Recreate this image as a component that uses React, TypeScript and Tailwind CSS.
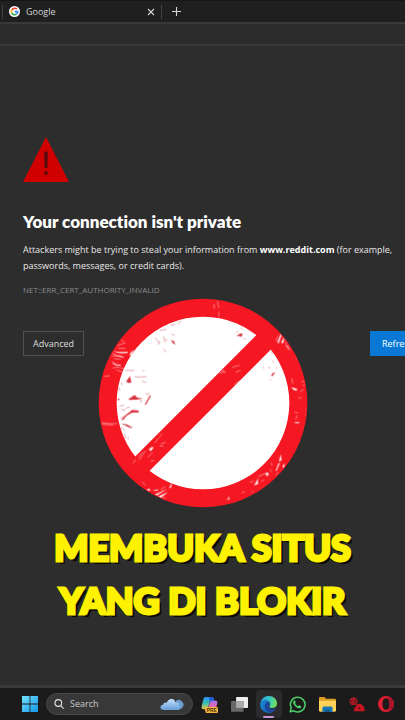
import type { ReactNode } from 'react';

function GoogleIcon() {
  return (
    <svg viewBox="0 0 24 24" className="size-[11px] shrink-0" aria-hidden="true">
      <circle cx="12" cy="12" r="12" fill="#fff" />
      <g fill="none" strokeWidth="3.6">
        <path d="M17.2 7.2A7 7 0 0 0 6 8.6" stroke="#ea4335" />
        <path d="M6 8.6a7 7 0 0 0 0 6.8" stroke="#fbbc05" />
        <path d="M6 15.4a7 7 0 0 0 10.6 2" stroke="#34a853" />
        <path d="M16.6 17.4A7 7 0 0 0 19 12.4h-6.6" stroke="#4285f4" />
      </g>
    </svg>
  );
}

function WarningIcon() {
  return (
    <svg viewBox="0 0 46 46" className="size-[46px]" aria-hidden="true">
      <path d="M23 0 46 45H0Z" fill="#d00000" />
      <path d="M21.2 14.5h3.6L24.4 31h-2.8Z" fill="#540c0c" />
      <circle cx="23" cy="36" r="1.9" fill="#540c0c" />
    </svg>
  );
}

function ProhibitedSign() {
  return (
    <svg viewBox="0 0 630 630" className="size-[210px]" role="img" aria-label="Blocked">
      <clipPath id="disc">
        <circle cx="315" cy="315" r="311" />
      </clipPath>
      <circle cx="315" cy="315" r="313" fill="#f51822" />
      <circle cx="315" cy="315" r="259" fill="#fff" />
      <path d="M110 520 520 110" stroke="#f51822" strokeWidth="61" />
      <g clipPath="url(#disc)" opacity=".9">
        {/* left half wear */}
        <g transform="translate(-21 -24)" strokeLinecap="round">
          <g fill="#fff">
            <path d="M66 181q14 7 43 4l2 4q-30 4-45-8Z" />
            <path d="M58 199q22-8 41 2l-2 2q-20-7-39-4Z" />
            <path d="M64 212q4 13 26 12l-1 3q-27 1-25-15Z" />
            <path d="m118 188 12-10-8 16-7 4ZM173 478l10-8 5 3-9 11ZM166 600l9-5 3 7-7 1Z" />
            <path d="m185 600 18-2-6 5ZM192 613l37-17-33 22ZM200 620l31-14-24 21ZM234 594l9-18-3 18Z" />
          </g>
          <g fill="none" stroke="#fff" strokeWidth="1.5">
            <path d="m80 166 22-7M82 174l21 2M91 148l7 8M64 190l10 4M66 234q12-7 34 3M41 259l14-2M76 239l22 9M70 206l18 1" />
            <path d="M32 398q20 4 45 3M34 403l32 2M127 519l6-10M143 500l12-13M163 483l-18 26M205 440l9-9M192 457l11-13M207 468l9 0M211 462l12-5M183 489l-13 13M180 514l9-3M153 576l10 9M210 598l12-8M212 628l10-5" />
          </g>
          <g fill="#d51c2a">
            <path d="m105 275 12-17 4 20-8 1ZM113 327l18-12 8 8 16 2-18 4-23 1ZM161 344l15-28 4 1-15 27Z" />
            <path d="m91 389 13-14 13-10 5-5 20 1 2 6-21 1-16 9-10 13ZM90 400l17 3 20 10-15-2Z" />
            <path d="m240 148 10 8 2 8-8-6ZM79 326l8 1-6 5Z" />
          </g>
          <g fill="none" stroke="#c53745" strokeWidth="1.5">
            <path d="M132 261l34-1M104 241l25 1M155 240l4 4M155 274l10 3M150 328v9M164 313l11-2M193 144l12 14M206 155l-4 8M218 140l4 17M242 132l8 4M262 101l8-9M240 105l11-1M208 121l17-3M86 349l12-4M92 359l10 1M106 354l9-3M84 292l2 10M91 278l1 6M108 409l12 5M90 412l12 9M100 432l4 12M111 442v5M91 384l7-6M248 153l3 9M226 148l1 3M219 178l5 8" />
          </g>
        </g>
        {/* right half wear */}
        <g transform="translate(309 -24)" strokeLinecap="round">
          <g fill="#fff">
            <path d="m229 158 10-29 4 3-10 29ZM240 158l11-22-4 24ZM244 137l19 22-3 1ZM250 153l17 25-5-3ZM263 153l5 0-2 5Z" />
            <path d="m270 291 17 5 2 6-10-1ZM281 396l15 0-3 4-12-1ZM159 587l12-23 0 18ZM193 551l8-5 2 9-6 3Z" />
            <path d="m223 545 9-25 5-2-9 22ZM234 511l6-18 2 17-7 5ZM244 529l7-10-1 17ZM81 632l3-14 2 8Z" />
          </g>
          <g fill="none" stroke="#fff" strokeWidth="1.5">
            <path d="M49 34l4 18M40 44v11M53 67v11M230 139l-5 14M254 167l13 14M286 206l5 3M272 266l3 13M303 275l6-1M306 287l8-7M298 304l9-5M293 322l8 3M316 357l4 8M314 372l2 5M282 367l7 2M288 377l-3 10" />
            <path d="M56 250l15-5 3 4M94 232l20-6M104 247l14-6M62 244l7-3M107 278l10-6M100 284l6-4M173 559l23-10M181 574l7-4M211 519l2 7M207 540l5 4M225 555l7-7M80 624l-1 6M123 608l8-3M152 603l4 4M148 576l9-2M190 590v3M246 548l6 2" />
          </g>
          <g fill="#cf2330">
            <path d="m106 138 12-8 8 2-6 9-3-3ZM210 257l5-8 8-2-8 11Z" />
          </g>
          <g fill="none" stroke="#c64a53" strokeWidth="1.5">
            <path d="M119 112l6 6M145 122l15 9M129 145l5 3M106 127l5-4M186 232l3 3M202 232l5 2M211 187l3 4M216 213l3 5M232 207l5 5M225 232l1 4M206 267l4 4M227 197l3 4" />
          </g>
        </g>
      </g>
    </svg>
  );
}

function WindowsIcon() {
  return (
    <svg viewBox="0 0 16 16" className="size-4" aria-hidden="true">
      <defs>
        <linearGradient id="win" x1="0" y1="0" x2="1" y2="1">
          <stop stopColor="#72e0ff" />
          <stop offset="1" stopColor="#1597e8" />
        </linearGradient>
      </defs>
      <path d="M0 0h7.6v7.6H0ZM8.4 0H16v7.6H8.4ZM0 8.4h7.6V16H0ZM8.4 8.4H16V16H8.4Z" fill="url(#win)" />
    </svg>
  );
}

function CloudIcon() {
  return (
    <svg viewBox="0 0 72 34" className="h-[11px] w-6 shrink-0" aria-hidden="true">
      <defs>
        <linearGradient id="cloud" x1="0" y1="0" x2="0" y2="1">
          <stop stopColor="#c5e1fa" />
          <stop offset="1" stopColor="#669fdb" />
        </linearGradient>
      </defs>
      <path d="M43 30C36 24 39 15 46 13c1-11 15-14 20-5 7 5 8 13 2 18-6 7-16 8-25 4Z" fill="#6d9fd2" />
      <path d="M9 34C-3 32-2 18 9 18c0-7 7-9 11-6 4-16 24-16 27-1 8-2 12 4 10 9 7 4 5 14-3 14Z" fill="url(#cloud)" />
    </svg>
  );
}

function SearchIcon() {
  return (
    <svg viewBox="0 0 30 30" className="size-[10px] shrink-0" fill="none" stroke="#dedede" strokeWidth="3.4" aria-hidden="true">
      <circle cx="13" cy="12" r="10" />
      <path d="m20 20 8 8" strokeLinecap="round" />
    </svg>
  );
}

function CopilotIcon() {
  return (
    <svg viewBox="0 0 50 50" className="size-[17px]" aria-hidden="true">
      <defs>
        <linearGradient id="copA" x1="0" y1="0" x2="0" y2="1">
          <stop stopColor="#278ff2" />
          <stop offset=".5" stopColor="#38c0b0" />
          <stop offset="1" stopColor="#eac73d" />
        </linearGradient>
        <linearGradient id="copB" x1="0" y1="0" x2="0" y2="1">
          <stop stopColor="#9b74ef" />
          <stop offset=".55" stopColor="#e968b5" />
          <stop offset="1" stopColor="#fa8c4b" />
        </linearGradient>
      </defs>
      <path d="M13 3h18c4 0 6 2 7 6l1 4h-7c-4 0-6 2-7 6l-4 14c-1 4-3 6-7 6H8c-6 0-7-4-6-9L7 9c1-4 3-6 6-6Z" fill="url(#copA)" />
      <path d="M34 13h8c6 0 7 4 6 9l-5 18c-1 4-3 6-7 6H18c-4 0-6-2-7-7h4c4 0 6-2 7-6l4-14c1-4 4-6 8-6Z" fill="url(#copB)" />
      <path d="M31 3c4 0 6 2 7 6l1 4h-7c-3 0-5 1-6 4l-3-14Z" fill="#255ad6" />
      <rect x="13" y="32" width="37" height="18" rx="4" fill="#f4b63e" />
      <text x="31.5" y="46" textAnchor="middle" fontSize="14" fontWeight="700" fontFamily="Liberation Sans, sans-serif" fill="#453009">PRE</text>
    </svg>
  );
}

function TaskViewIcon() {
  return (
    <svg viewBox="0 0 50 44" className="h-[15px] w-[17px]" aria-hidden="true">
      <rect x="15" y="0" width="35" height="32" rx="2" fill="#ededed" />
      <rect x="0" y="12" width="37" height="31" rx="2" fill="#686868" />
      <path d="M15 12h22v20H15Z" fill="#aaa" />
    </svg>
  );
}

function EdgeIcon() {
  return (
    <svg viewBox="0 0 52 52" className="size-[17px]" aria-hidden="true">
      <defs>
        <linearGradient id="edgeTop" x1="0" y1=".3" x2="1" y2=".5">
          <stop stopColor="#279de7" />
          <stop offset=".5" stopColor="#35c8c9" />
          <stop offset="1" stopColor="#72df55" />
        </linearGradient>
        <linearGradient id="edgeBody" x1="0" y1="0" x2="1" y2="1">
          <stop stopColor="#188cda" />
          <stop offset="1" stopColor="#1358ad" />
        </linearGradient>
      </defs>
      <path d="M1 23C3 8 14 0 27 0c14 0 25 10 25 22 0 10-7 15-15 15-6 0-10-3-8-6 7-9-2-18-12-18C9 13 3 18 1 23Z" fill="url(#edgeTop)" />
      <path d="M1 23c2-6 8-10 16-10 10 0 17 10 11 18-5 8 9 14 21 7-8 14-24 17-35 10C4 43-1 33 1 23Z" fill="url(#edgeBody)" />
      <path d="M20 19c-9 7-7 23 6 29 8 3 17-2 23-10-13 6-27 0-21-9 2-4 1-8-2-11-2-1-4-1-6 1Z" fill="#1c4598" />
    </svg>
  );
}

function WhatsAppIcon() {
  return (
    <svg viewBox="0 0 24 24" className="size-[17px]" aria-hidden="true">
      <path d="m1.7 22.3 1.5-5.5A10.3 10.3 0 1 1 7 20.9Z" fill="none" stroke="#4dcb68" strokeWidth="2.2" strokeLinejoin="round" />
      <path d="M8.4 6.6c-.4-.8-.9-.7-1.4-.3-2.4 2.4-.6 5.8 1.7 8 2.2 2.3 5.8 4.3 8 2.3.6-.5.9-2 .3-2.3l-2.4-1.2c-.9-.3-1.3 1.3-2.1 1.1-1.5-.5-3.3-2.2-3.9-3.7.3-.7 1.2-1.1 1-1.8Z" fill="#4dcb68" />
    </svg>
  );
}

function FolderIcon() {
  return (
    <svg viewBox="0 0 50 44" className="h-[15px] w-[17px]" aria-hidden="true">
      <path d="M0 3q0-3 3-3h13l5 5h25q4 0 4 4v13H0Z" fill="#dc9d22" />
      <path d="M0 11h50v28q0 4-4 4H4q-4 0-4-4Z" fill="#ffd35a" />
      <path d="M10 44V32q0-4 4-4h22q4 0 4 4v12Z" fill="#1979b8" />
      <path d="M17 37h16v7H17Z" fill="#115b90" />
    </svg>
  );
}

function DebugIcon() {
  return (
    <svg viewBox="0 0 50 46" className="h-[15px] w-[17px]" aria-hidden="true">
      <circle cx="16" cy="13" r="10" fill="#5d1118" stroke="#ce1f2d" strokeWidth="5" strokeDasharray="4 2" />
      <path d="m9 7 13 12M20 6 10 20M16 2v21" stroke="#db2432" strokeWidth="2" />
      <path d="M18 44V33q6 0 10-9 8-7 16 2 6 4 6 18Z" fill="#cc1523" />
      <path d="m28 35 7-4 2 7Z" fill="#4f1015" />
      <path d="m23 22 6 5" stroke="#d31d2b" strokeWidth="4" />
    </svg>
  );
}

function OperaIcon() {
  return (
    <svg viewBox="0 0 50 50" className="size-4" aria-hidden="true">
      <path fillRule="evenodd" d="M25 0a25 25 0 1 0 0 50 25 25 0 0 0 0-50Zm0 7c8 0 11 9 11 18s-3 18-11 18-11-9-11-18S17 7 25 7Z" fill="#df2034" />
      <path d="M25 7c5-4 12-3 17 2 10 9 10 23 0 32-5 5-12 6-17 2 8 0 11-9 11-18S33 7 25 7Z" fill="#a9142a" />
    </svg>
  );
}

const apps: { name: string; icon: ReactNode; active?: boolean }[] = [
  { name: 'Copilot', icon: <CopilotIcon /> },
  { name: 'Task view', icon: <TaskViewIcon /> },
  { name: 'Microsoft Edge', icon: <EdgeIcon />, active: true },
  { name: 'WhatsApp', icon: <WhatsAppIcon /> },
  { name: 'File Explorer', icon: <FolderIcon /> },
  { name: 'Debugger', icon: <DebugIcon /> },
  { name: 'Opera', icon: <OperaIcon /> },
];

function TabBar() {
  return (
    <header>
      <div className="flex h-[22px] items-center border-t border-[#151515] bg-[#1f1f1f] pl-[2px] text-[#d6d6d6]">
        <div className="flex h-[14px] w-40 items-center border-x border-[#414141] pr-[6px] pl-[6px]">
          <GoogleIcon />
          <span className="ml-[6px] flex-1 text-[9px] leading-[14px]">Google</span>
          <button type="button" aria-label="Close tab">
            <svg viewBox="0 0 8 8" className="size-2" stroke="currentColor" strokeWidth="1.1" aria-hidden="true">
              <path d="m1 1 6 6M7 1 1 7" />
            </svg>
          </button>
        </div>
        <button type="button" aria-label="New tab" className="ml-[9px]">
          <svg viewBox="0 0 11 11" className="size-[11px]" stroke="currentColor" strokeWidth="1.1" aria-hidden="true">
            <path d="M5.5 1v9M1 5.5h9" />
          </svg>
        </button>
      </div>
      <div className="h-6 border-y-2 border-[#393939] bg-[#2b2b2b]" />
    </header>
  );
}

function Taskbar() {
  return (
    <footer className="flex h-[35px] items-center border-t-3 border-[#393939] bg-[#1b1b1b] pr-1 pl-[22px]">
      <button type="button" aria-label="Start">
        <WindowsIcon />
      </button>
      <label className="ml-2 flex h-[22px] w-[147px] items-center rounded-full border border-[#474747] bg-[#383838] pr-2 pl-[7px]">
        <SearchIcon />
        <input
          type="search"
          aria-label="Search"
          placeholder="Search"
          className="ml-[6px] min-w-0 flex-1 bg-transparent text-[9px] leading-4 outline-none placeholder:text-[#c9c9c9]"
        />
        <CloudIcon />
      </label>
      <nav className="ml-[2px] grid flex-1 grid-cols-7 justify-items-center">
        {apps.map((app) => (
          <button
            key={app.name}
            type="button"
            aria-label={app.name}
            className={`relative flex h-7 w-[26px] items-center justify-center rounded-sm ${app.active ? 'bg-[#2b2b2e]' : ''}`}
          >
            {app.icon}
            {app.active && <span className="absolute bottom-0 h-[2px] w-[11px] rounded-full bg-[#c596d8]" />}
          </button>
        ))}
      </nav>
    </footer>
  );
}

export default function App() {
  return (
    <div className="relative flex min-h-screen flex-col overflow-hidden bg-[#2d2d2d] font-['Open_Sans','Noto_Sans',sans-serif] text-white">
      <TabBar />
      <main className="flex-1 pt-[91px] pl-[23px]">
        <WarningIcon />
        <h1 className="mt-[27px] font-['Lato','Open_Sans',sans-serif] text-[17px] leading-6 font-extrabold [font-variant-ligatures:none]">
          Your connection isn't private
        </h1>
        <p className="mt-2 pr-3 text-[9px] leading-4 text-[#e8e8e8]">
          Attackers might be trying to steal your information from <strong className="text-white">www.reddit.com</strong> (for example,
          passwords, messages, or credit cards).
        </p>
        <p className="mt-2 text-[8px] leading-4 text-[#8b8b8b]">NET::ERR_CERT_AUTHORITY_INVALID</p>
        <div className="mt-[33px] flex justify-between">
          <button type="button" className="h-[25px] w-[61px] border border-[#505050] text-[9px] text-[#dddddd]">
            Advanced
          </button>
          <button type="button" className="-mr-6 h-[25px] w-[59px] bg-[#0878d4] pl-3 text-left text-[9px]">
            Refresh
          </button>
        </div>
      </main>
      <Taskbar />
      <div className="absolute inset-x-0 top-[298px] flex flex-col items-center">
        <ProhibitedSign />
        <p className="mt-[13px] text-center font-['Lato',sans-serif] text-[36px] leading-[53px] font-black text-[#fff200] [-webkit-text-stroke:3px_#fff200] [text-shadow:-1px_-1px_0_#090900,1px_-1px_0_#090900,-1px_2px_0_#090900,2px_2px_0_#090900,3px_3px_0_#090900]">
          MEMBUKA SITUS
          <br />
          YANG DI BLOKIR
        </p>
      </div>
    </div>
  );
}
